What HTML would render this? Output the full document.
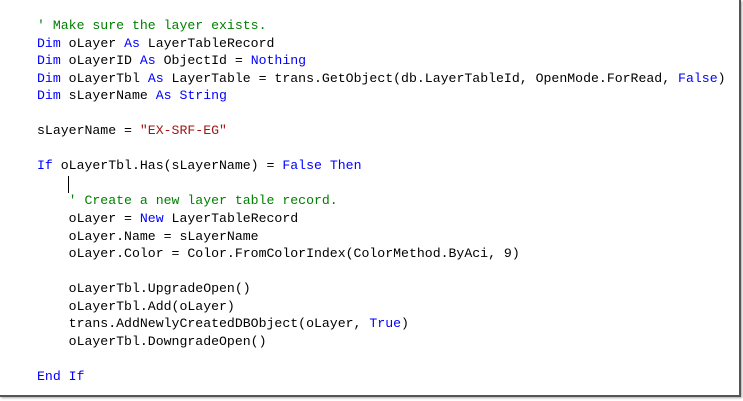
<!DOCTYPE html><html><head><style>
html,body{margin:0;padding:0;background:#fff;width:743px;height:401px;overflow:hidden}
.box{position:absolute;left:0;top:0;width:739px;height:395px;border-right:2px solid #555;border-bottom:2px solid #555;box-shadow:1px 1px 2px #aaa;background:#fff}
pre{position:absolute;left:37px;top:17px;margin:0;font-family:"Liberation Mono",monospace;font-size:13.2px;line-height:17.55px;color:#000}
.c{color:#008000}.k{color:#0000ff}.s{color:#a31515}
.cur{position:absolute;left:68px;top:176px;width:1px;height:17px;background:#000}
</style></head><body><div class="box"></div>
<pre><span class="c">' Make sure the layer exists.</span>
<span class="k">Dim</span> oLayer <span class="k">As</span> LayerTableRecord
<span class="k">Dim</span> oLayerID <span class="k">As</span> ObjectId = <span class="k">Nothing</span>
<span class="k">Dim</span> oLayerTbl <span class="k">As</span> LayerTable = trans.GetObject(db.LayerTableId, OpenMode.ForRead, <span class="k">False</span>)
<span class="k">Dim</span> sLayerName <span class="k">As</span> <span class="k">String</span>

sLayerName = <span class="s">"EX-SRF-EG"</span>

<span class="k">If</span> oLayerTbl.Has(sLayerName) = <span class="k">False</span> <span class="k">Then</span>

    <span class="c">' Create a new layer table record.</span>
    oLayer = <span class="k">New</span> LayerTableRecord
    oLayer.Name = sLayerName
    oLayer.Color = Color.FromColorIndex(ColorMethod.ByAci, 9)

    oLayerTbl.UpgradeOpen()
    oLayerTbl.Add(oLayer)
    trans.AddNewlyCreatedDBObject(oLayer, <span class="k">True</span>)
    oLayerTbl.DowngradeOpen()

<span class="k">End</span> <span class="k">If</span></pre>
<div class="cur"></div>
</body></html>
